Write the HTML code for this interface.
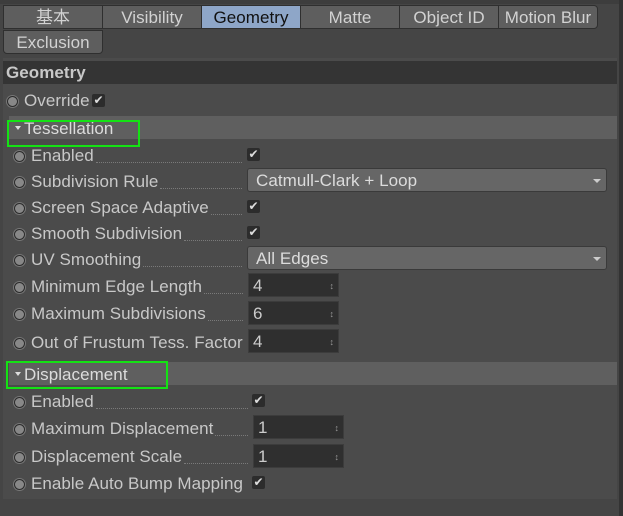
<!DOCTYPE html>
<html><head><style>
body{margin:0;width:623px;height:516px;background:#454545;font-family:"Liberation Sans","Noto Sans CJK SC",sans-serif;color:#c8c8c8;overflow:hidden;position:relative;font-size:17px;letter-spacing:0.05px}
.a{position:absolute}
.tab{position:absolute;height:24px;background:#5e5e5e;border:1px solid #2f2f2f;box-sizing:border-box;text-align:center;line-height:23px;font-size:17px;color:#d2d2d2}
.sel{background:#8ea6c8;color:#111}
.panel{position:absolute;left:3px;top:58px;width:614px;height:441px;background:#4b4b4b}
.hdr{position:absolute;left:3px;top:61px;width:614px;height:23px;background:#343434;font-weight:bold;line-height:24px;padding-left:3px;box-sizing:border-box}
.bar{position:absolute;left:9px;width:608px;height:23px;background:#5f5f5f;line-height:25px;padding-left:15px;box-sizing:border-box;color:#dcdcdc}
.bar:before{content:"";position:absolute;left:6px;top:10px;border-left:3px solid transparent;border-right:3px solid transparent;border-top:4px solid #ddd}
.green{position:absolute;border:2px solid #14e214;box-sizing:border-box}
.row{position:absolute;height:22px;line-height:24px;white-space:nowrap;display:flex;align-items:center}
.rad{display:inline-block;width:9px;height:9px;border-radius:50%;background:#888;border:1px solid #2b2b2b;box-shadow:0 0 0 1px #777;margin:0 6px 0 1px;flex:none}
.dots{flex:1;height:0;border-bottom:1px dotted #7a7a7a;margin:12px 5px 0 2px}
.cb{position:absolute;width:13px;height:13px;background:#2c2c2c;border-radius:2px;color:#ddd;font-size:12px;line-height:13px;text-align:center}
.dd{position:absolute;left:247px;width:360px;height:24px;background:#666;border:1px solid #3a3a3a;border-radius:3px;box-sizing:border-box;padding-left:8px;line-height:24px;color:#dcdcdc}
.dd:after{content:"";position:absolute;right:5px;top:10px;border-left:4px solid transparent;border-right:4px solid transparent;border-top:4px solid #ccc}
.num{position:absolute;width:91px;height:24px;background:#2f2f2f;border:1px solid #3c3c3c;box-sizing:border-box;padding-left:4px;line-height:24px;color:#ccc}
.num:after{content:"\2195";position:absolute;right:4px;top:0;font-size:9px;color:#999}
</style></head><body>
<div class="a" style="left:0;top:0;width:623px;height:4px;background:#3d3d3d"></div>
<div class="a" style="left:619px;top:0;width:4px;height:516px;background:#333"></div>
<div class="tab" style="left:3px;top:5px;width:100px">基本</div>
<div class="tab" style="left:102px;top:5px;width:100px">Visibility</div>
<div class="tab sel" style="left:201px;top:5px;width:100px">Geometry</div>
<div class="tab" style="left:300px;top:5px;width:100px">Matte</div>
<div class="tab" style="left:399px;top:5px;width:100px">Object ID</div>
<div class="tab" style="left:498px;top:5px;width:100px;border-radius:0 4px 4px 0">Motion Blur</div>
<div class="tab" style="left:3px;top:30px;width:100px;border-radius:0 0 4px 4px">Exclusion</div>
<div class="panel"></div>
<div class="hdr">Geometry</div>
<div class="row" style="left:6px;top:90px"><span class="rad"></span>Override</div>
<div class="cb" style="left:92px;top:94px">✔</div>

<div class="bar" style="top:116px">Tessellation</div>
<div class="green" style="left:7px;top:120px;width:133px;height:27px"></div>

<div class="row" style="left:13px;top:145px;width:234px"><span class="rad"></span>Enabled<span class="dots"></span></div><div class="cb" style="left:247px;top:148px">✔</div>
<div class="row" style="left:13px;top:171px;width:234px"><span class="rad"></span>Subdivision Rule<span class="dots"></span></div><div class="dd" style="top:168px">Catmull-Clark + Loop</div>
<div class="row" style="left:13px;top:197px;width:234px"><span class="rad"></span>Screen Space Adaptive<span class="dots"></span></div><div class="cb" style="left:247px;top:200px">✔</div>
<div class="row" style="left:13px;top:223px;width:234px"><span class="rad"></span>Smooth Subdivision<span class="dots"></span></div><div class="cb" style="left:247px;top:226px">✔</div>
<div class="row" style="left:13px;top:249px;width:234px"><span class="rad"></span>UV Smoothing<span class="dots"></span></div><div class="dd" style="top:246px">All Edges</div>
<div class="row" style="left:13px;top:276px;width:235px"><span class="rad"></span>Minimum Edge Length<span class="dots"></span></div><div class="num" style="left:248px;top:273px">4</div>
<div class="row" style="left:13px;top:303px;width:235px"><span class="rad"></span>Maximum Subdivisions<span class="dots"></span></div><div class="num" style="left:248px;top:301px">6</div>
<div class="row" style="left:13px;top:332px;width:235px"><span class="rad"></span>Out of Frustum Tess. Factor</div><div class="num" style="left:248px;top:329px">4</div>

<div class="bar" style="top:362px">Displacement</div>
<div class="green" style="left:6px;top:361px;width:162px;height:28px"></div>

<div class="row" style="left:13px;top:391px;width:240px"><span class="rad"></span>Enabled<span class="dots"></span></div><div class="cb" style="left:252px;top:394px">✔</div>
<div class="row" style="left:13px;top:418px;width:240px"><span class="rad"></span>Maximum Displacement<span class="dots"></span></div><div class="num" style="left:253px;top:415px">1</div>
<div class="row" style="left:13px;top:446px;width:240px"><span class="rad"></span>Displacement Scale<span class="dots"></span></div><div class="num" style="left:253px;top:444px">1</div>
<div class="row" style="left:13px;top:473px"><span class="rad"></span>Enable Auto Bump Mapping</div><div class="cb" style="left:252px;top:476px">✔</div>
</body></html>
